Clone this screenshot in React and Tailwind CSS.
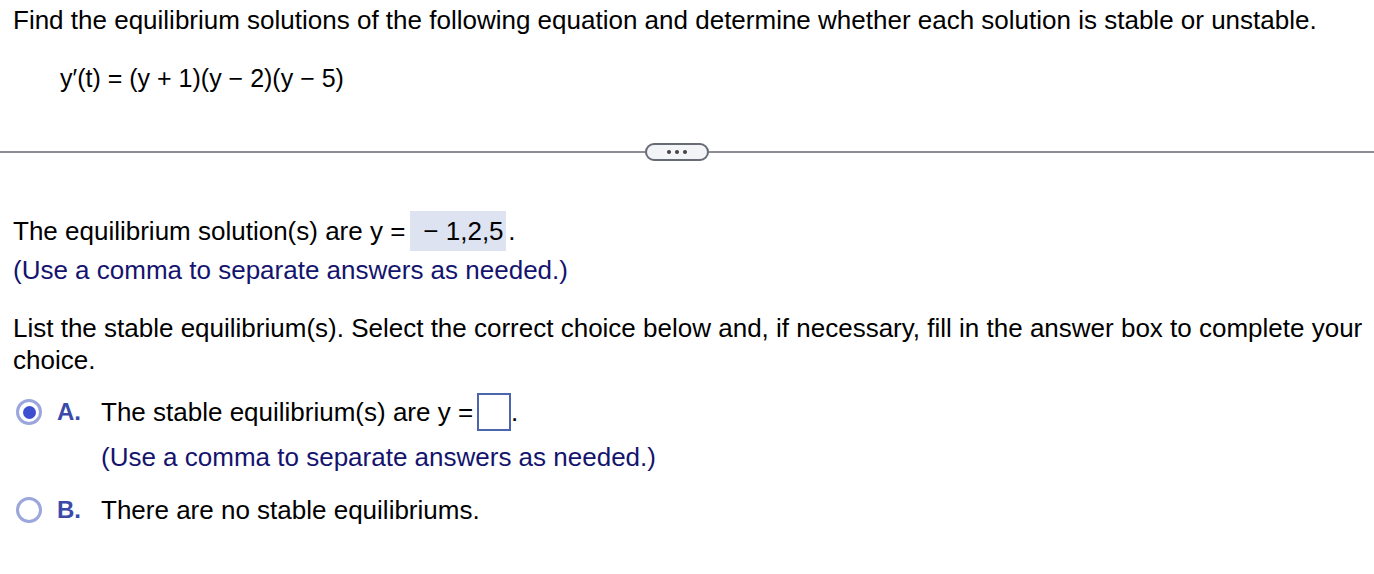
export default function App() {
  return (
    <div className="w-[1374px] h-[574px] bg-white text-black overflow-hidden" style={{ fontFamily: '"Liberation Sans", Arial, sans-serif' }}>
      <div className="pl-[13px] pt-[4px] text-[26px] leading-[32px]">
        Find the equilibrium solutions of the following equation and determine whether each solution is stable or unstable.
      </div>
      <div className="pl-[60px] mt-[26px] text-[25px] leading-[32px]">
        y′(t) = (y + 1)(y − 2)(y − 5)
      </div>
      <div className="relative mt-[45px] h-[26px] flex items-center">
        <div className="w-full h-[2px] bg-[#8b8e96]" />
        <div className="absolute left-[645px] top-[4px] w-[64px] h-[18px] rounded-full border-2 border-[#676b75] bg-[#f3f4f7] flex items-center justify-center gap-[4px]">
          <span className="w-[4px] h-[4px] rounded-full bg-[#444]" />
          <span className="w-[4px] h-[4px] rounded-full bg-[#444]" />
          <span className="w-[4px] h-[4px] rounded-full bg-[#444]" />
        </div>
      </div>
      <div className="pl-[13px] mt-[46px] text-[26px]">
        <div className="flex items-center h-[40px]">
          <span>The equilibrium solution(s) are y =</span>
          <span className="ml-[5px] bg-[#dde3f0] h-[40px] w-[96px] pl-[13px] flex items-center">− 1,2,5</span>
          <span className="ml-[2px]">.</span>
        </div>
        <div className="text-[#14146e] leading-[32px] mt-[3px]">(Use a comma to separate answers as needed.)</div>
        <div className="mt-[26px] leading-[32px]">
          List the stable equilibrium(s). Select the correct choice below and, if necessary, fill in the answer box to complete your choice.
        </div>
        <div className="mt-[16px] flex items-start">
          <div className="w-[44px] pl-[3px] h-[40px] flex items-center">
            <div className="w-[26px] h-[26px] rounded-full border-[3px] border-[#9aa6dc] bg-white flex items-center justify-center">
              <div className="w-[13px] h-[13px] rounded-full bg-[#3b4fd0]" />
            </div>
          </div>
          <div className="w-[44px] h-[40px] flex items-center font-bold text-[#3b4aa8] text-[24px]">A.</div>
          <div>
            <div className="flex items-center h-[40px]">
              <span>The stable equilibrium(s) are y =</span>
              <span className="ml-[4px] w-[34px] h-[38px] border-2 border-[#4a66b0]" />
              <span>.</span>
            </div>
            <div className="text-[#14146e] leading-[32px] mt-[9px]">(Use a comma to separate answers as needed.)</div>
          </div>
        </div>
        <div className="mt-[19px] flex items-start">
          <div className="w-[44px] pl-[3px] h-[36px] flex items-center">
            <div className="w-[26px] h-[26px] rounded-full border-[3px] border-[#9aa6dc] bg-white" />
          </div>
          <div className="w-[44px] h-[36px] flex items-center font-bold text-[#3b4aa8] text-[24px]">B.</div>
          <div className="h-[36px] flex items-center">There are no stable equilibriums.</div>
        </div>
      </div>
    </div>
  );
}
